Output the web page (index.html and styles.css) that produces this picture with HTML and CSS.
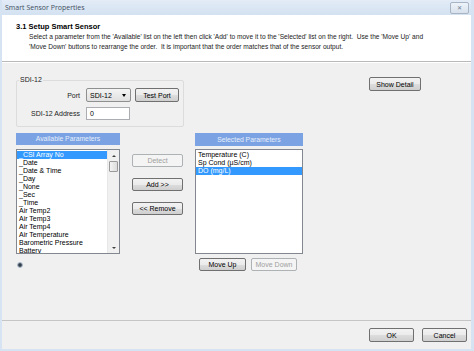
FILE: index.html
```html
<!DOCTYPE html>
<html lang="en">
<head>
    <meta charset="UTF-8">
    <title>Smart Sensor Properties</title>
    <link rel="stylesheet" href="styles.css">
</head>
<body>
    <div class="window">
        <div class="titlebar">
            <span class="title">Smart Sensor Properties</span>
            <span class="close">&#x2715;</span>
        </div>
        <div class="header">
            <div class="step">3.1 Setup Smart Sensor</div>
            <p class="desc">Select a parameter from the 'Available' list on the left then click 'Add' to move it to the 'Selected' list on the right.&nbsp; Use the 'Move Up' and 'Move Down' buttons to rearrange the order.&nbsp; It is important that the order matches that of the sensor output.</p>
        </div>
        <div class="content">
            <div class="top-row">
                <fieldset class="group">
                    <legend>SDI-12</legend>
                    <div class="form-grid">
                        <label class="lbl">Port</label>
                        <div class="ctrls">
                            <div class="select">SDI-12<span class="arrow"></span></div>
                            <button class="btn btn-test">Test Port</button>
                        </div>
                        <label class="lbl">SDI-12 Address</label>
                        <div class="ctrls">
                            <div class="textbox">0</div>
                        </div>
                    </div>
                </fieldset>
                <button class="btn btn-detail">Show Detail</button>
            </div>
            <div class="lists-row">
                <div class="col col-left">
                    <div class="list-head">Available Parameters</div>
                    <div class="listbox">
                        <ul class="items">
                            <li class="sel">_CSI Array No</li>
                            <li>_Date</li>
                            <li>_Date &amp; Time</li>
                            <li>_Day</li>
                            <li>_None</li>
                            <li>_Sec</li>
                            <li>_Time</li>
                            <li>Air Temp2</li>
                            <li>Air Temp3</li>
                            <li>Air Temp4</li>
                            <li>Air Temperature</li>
                            <li>Barometric Pressure</li>
                            <li>Battery</li>
                        </ul>
                        <div class="scrollbar">
                            <span class="sb-arrow up"></span>
                            <span class="sb-thumb"></span>
                            <span class="sb-fill"></span>
                            <span class="sb-arrow down"></span>
                        </div>
                    </div>
                    <span class="radio"></span>
                </div>
                <div class="col col-mid">
                    <button class="btn btn-mid" disabled>Detect</button>
                    <button class="btn btn-mid">Add &gt;&gt;</button>
                    <button class="btn btn-mid">&lt;&lt; Remove</button>
                </div>
                <div class="col col-right">
                    <div class="list-head">Selected Parameters</div>
                    <div class="listbox">
                        <ul class="items">
                            <li>Temperature (C)</li>
                            <li>Sp Cond (µS/cm)</li>
                            <li class="sel">DO (mg/L)</li>
                        </ul>
                    </div>
                    <div class="move-btns">
                        <button class="btn btn-up">Move Up</button>
                        <button class="btn btn-down" disabled>Move Down</button>
                    </div>
                </div>
            </div>
        </div>
        <div class="footer">
            <button class="btn btn-foot">OK</button>
            <button class="btn btn-foot">Cancel</button>
        </div>
    </div>
</body>
</html>
```

FILE: styles.css
```css
  body {
      margin: 0;
      background: #d6e3f2;
      font-family: "Liberation Sans", Arial, sans-serif;
      font-size: 7px;
      color: #000;
  }
  .window {
      width: 469px;
      height: 349px;
      margin-left: 2px;
      display: flex;
      flex-direction: column;
      background: #f0f0f0;
  }
  .titlebar {
      height: 15px;
      display: flex;
      align-items: center;
      justify-content: space-between;
      padding: 0 2px 0 3px;
      background: linear-gradient(#e3ecf7, #d3e1f1);
  }
  .title {
      font-family: "Open Sans", "Liberation Sans", sans-serif;
      font-size: 7px;
      color: #3f4f62;
  }
  .close {
      width: 17px;
      height: 10px;
      margin-top: 1px;
      border: 1px solid #a7b4c4;
      border-radius: 2px;
      background: linear-gradient(#eef3f9, #d7e1ec);
      color: #6b7c90;
      font-size: 6px;
      line-height: 10px;
      text-align: center;
  }
  /* 上の白い説明部分 */
  .header {
      height: 47px;
      box-sizing: border-box;
      padding: 7px 40px 0 14px;
      background: #fff;
      border-bottom: 1px solid #b9b9b9;
      box-shadow: 0 1px 0 #fff;
  }
  .step {
      font-weight: bold;
      font-size: 7.5px;
      line-height: 9px;
  }
  .desc {
      margin: 1px 0 0 13px;
      font-size: 6.6px;
      line-height: 10px;
      color: #222;
  }
  .content {
      flex: 1;
      padding: 14px 50px 0 14px;
  }
  .top-row {
      display: flex;
      align-items: flex-start;
  }
  .group {
      width: 168px;
      height: 51px;
      box-sizing: border-box;
      margin: 0;
      padding: 4px 0 0 0;
      border: 1px solid #dcdcdc;
      border-radius: 2px;
  }
  .group legend {
      padding: 0 1px;
      margin-left: 2px;
      font-size: 7px;
      line-height: 8px;
      color: #222;
  }
  .form-grid {
      display: grid;
      grid-template-columns: 63px 1fr;
      column-gap: 6px;
      row-gap: 5px;
      align-items: center;
  }
  .lbl {
      text-align: right;
      color: #222;
  }
  .ctrls {
      display: flex;
      gap: 4px;
  }
  .select {
      width: 45px;
      height: 14px;
      box-sizing: border-box;
      padding-left: 3px;
      border: 1px solid #8e8f8f;
      border-radius: 2px;
      background: linear-gradient(#f4f4f4, #e0e0e0);
      display: flex;
      align-items: center;
      justify-content: space-between;
  }
  .arrow {
      width: 0;
      height: 0;
      margin-right: 4px;
      border-left: 2.5px solid transparent;
      border-right: 2.5px solid transparent;
      border-top: 3px solid #000;
  }
  .textbox {
      width: 44px;
      height: 13px;
      box-sizing: border-box;
      padding-left: 3px;
      border: 1px solid #abadb3;
      background: #fff;
      line-height: 11px;
  }
  .btn {
      box-sizing: border-box;
      height: 14px;
      padding: 0;
      border: 1px solid #707070;
      border-radius: 2px;
      background: linear-gradient(#f2f2f2 0%, #ebebeb 50%, #dddddd 51%, #cfcfcf 100%);
      font-family: "Liberation Sans", Arial, sans-serif;
      font-size: 7px;
      color: #000;
  }
  .btn:disabled {
      border-color: #adb2b5;
      background: #f4f4f4;
      color: #a0a0a0;
  }
  .btn-test { width: 44px; }
  .btn-detail {
      width: 52px;
      margin: 1px 0 0 auto;
  }
  .lists-row {
      display: flex;
      gap: 12px;
      margin-top: 6px;
  }
  .col {
      display: flex;
      flex-direction: column;
  }
  .col-left { width: 104px; }
  .col-right { width: 108px; }
  .list-head {
      height: 12px;
      background: #7ba3e3;
      color: #e6eefb;
      text-align: center;
      line-height: 12px;
      font-size: 6.8px;
  }
  .col-right .list-head {
      height: 13px;
      line-height: 13px;
  }
  .listbox {
      height: 105px;
      box-sizing: border-box;
      margin-top: 4px;
      border: 1px solid #828790;
      background: #fff;
      display: flex;
      overflow: hidden;
  }
  .col-right .listbox { margin-top: 3px; }
  .items {
      flex: 1;
      list-style: none;
      margin: 0;
      padding: 1px 0 0 0;
  }
  .items li {
      height: 8px;
      line-height: 8px;
      padding-left: 2px;
      white-space: nowrap;
  }
  .items li.sel {
      background: #3399ff;
      color: #fff;
  }
  .scrollbar {
      width: 11px;
      display: flex;
      flex-direction: column;
      background: #f0f0f0;
      border-left: 1px solid #e8e8e8;
  }
  .sb-arrow {
      height: 11px;
      display: flex;
      align-items: center;
      justify-content: center;
  }
  .sb-arrow::after {
      content: "";
      border-left: 2px solid transparent;
      border-right: 2px solid transparent;
  }
  .sb-arrow.up::after { border-bottom: 2px solid #404040; }
  .sb-arrow.down::after { border-top: 2px solid #404040; }
  .sb-thumb {
      height: 9px;
      margin: 0 1px;
      border: 1px solid #9a9a9a;
      border-radius: 1px;
      background: linear-gradient(90deg, #f3f3f3, #dcdcdc);
  }
  .sb-fill { flex: 1; }
  .radio {
      width: 6px;
      height: 6px;
      margin: 8px 0 0 1px;
      border-radius: 50%;
      background: radial-gradient(circle, #333e4c 0 1.4px, #7d8a9a 1.8px, #c6cfd9 3px);
  }
  .col-mid {
      width: 51px;
      padding-top: 21px;
      gap: 10px;
  }
  .btn-mid { height: 13px; }
  .col-mid .btn-mid + .btn-mid { margin-top: 1px; }
  .move-btns {
      display: flex;
      gap: 5px;
      margin: 4px 0 0 4px;
  }
  .btn-up { width: 47px; height: 13px; }
  .btn-down { width: 46px; height: 13px; }
  /* 下のOK/Cancel */
  .footer {
      height: 29px;
      box-sizing: border-box;
      border-top: 1px solid #c5c5c5;
      display: flex;
      justify-content: flex-end;
      align-items: flex-start;
      gap: 8px;
      padding: 7px 4px 0 0;
  }
  .btn-foot { width: 45px; }
```
